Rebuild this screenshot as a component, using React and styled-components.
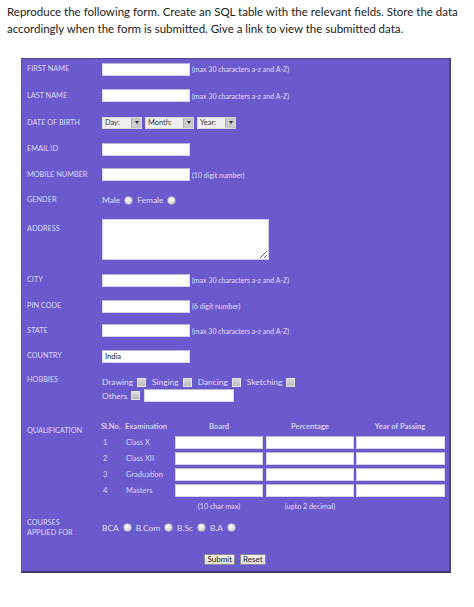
import React from "react";
import styled, { createGlobalStyle } from "styled-components";

const Global = createGlobalStyle`
  html, body { margin: 0; padding: 0; background: #fff; }
  body { font-family: Lato, "Open Sans", sans-serif; }
  * { box-sizing: border-box; }
`;

const Page = styled.div`
  width: 474px;
  height: 607px;
  background: #fff;
  padding-top: 3px;
`;

const Intro = styled.p`
  margin: 0 0 21px 0;
  padding: 0 6px 0 7px;
  font-family: Lato, sans-serif;
  font-size: 11.5px;
  line-height: 17px;
  color: #222;
`;

const Panel = styled.form`
  margin: 0 0 0 21px;
  width: 430px;
  background: #6a5acd;
  border-top: 1px solid #4b4690;
  border-left: 1px solid #5a52a8;
  border-right: 2px solid #4a4578;
  border-bottom: 2px solid #3f3a66;
  padding: 0 0 0 5px;
  color: #e2defa;
  font-family: Lato, sans-serif;
`;

const Row = styled.div`
  display: grid;
  grid-template-columns: 75px 1fr;
  align-items: ${(p) => (p.$top ? "start" : "center")};
  height: ${(p) => p.$h}px;
  padding-bottom: ${(p) => p.$pb || 0}px;
`;

const Label = styled.div`
  font-size: 7.3px;
  line-height: 10px;
  text-transform: uppercase;
  color: #ddd8f6;
  padding-top: ${(p) => p.$pt || 0}px;
`;

const Controls = styled.div`
  display: flex;
  align-items: center;
  gap: ${(p) => p.$gap || 0}px;
  padding-top: ${(p) => p.$pt || 0}px;
`;

const Stack = styled.div`
  display: flex;
  flex-direction: column;
  gap: 2px;
  padding-top: ${(p) => p.$pt || 0}px;
`;

const TextBox = styled.input.attrs({ type: "text" })`
  width: ${(p) => p.$w || 88}px;
  height: 13px;
  border: 1px solid #d6d3e6;
  border-top-color: #b9b5cf;
  background: #fff;
  padding: 0 2px;
  margin: 0;
  font-family: Lato, sans-serif;
  font-size: 7.5px;
  color: #222;
  outline: none;
`;

const Hint = styled.span`
  margin-left: 2px;
  font-size: 7px;
  color: #e2defa;
  white-space: nowrap;
`;

const FakeSelect = styled.span`
  display: inline-flex;
  align-items: center;
  justify-content: space-between;
  width: ${(p) => p.$w}px;
  height: 12px;
  background: #efefef;
  border: 1px solid #d8d8d8;
  padding-left: 2px;
  font-size: 7.4px;
  color: #333;
`;

const Arrow = styled.span`
  width: 10px;
  height: 10px;
  background: #c9c9c9;
  border-left: 1px solid #b0b0b0;
  display: inline-flex;
  align-items: center;
  justify-content: center;
  &::after {
    content: "";
    border-left: 2.5px solid transparent;
    border-right: 2.5px solid transparent;
    border-top: 3px solid #333;
  }
`;

const Opt = styled.span`
  font-size: 8.4px;
  color: #e2defa;
  margin-right: ${(p) => p.$mr ?? 4}px;
`;

const Radio = styled.span`
  display: inline-block;
  width: 9px;
  height: 9px;
  border-radius: 50%;
  border: 1px solid #a9a6bd;
  background: radial-gradient(circle at 40% 35%, #ffffff 0%, #e6e6e6 45%, #b9b9b9 100%);
  margin-right: ${(p) => p.$mr ?? 4}px;
`;

const Check = styled.span`
  display: inline-block;
  width: 9px;
  height: 9px;
  border: 1px solid #e4e4ec;
  background: linear-gradient(#d8d8d8, #bdbdbd);
  margin-right: ${(p) => p.$mr ?? 6}px;
`;

const Area = styled.textarea`
  width: 167px;
  height: 41px;
  border: 1px solid #cfcbe2;
  background: #fff;
  margin: 0;
  resize: both;
  outline: none;
`;

const QTable = styled.div`
  display: grid;
  grid-template-columns: 24px 50px 91px 90px 89px;
  grid-auto-rows: 16px;
  align-items: center;
  padding-top: 4px;
  margin-left: -1px;
`;

const QHead = styled.div`
  font-size: 7.6px;
  font-weight: 700;
  color: #d7d2f2;
  text-align: ${(p) => (p.$center ? "center" : "left")};
  width: ${(p) => (p.$center ? "88px" : "auto")};
  white-space: nowrap;
`;

const QCell = styled.div`
  font-size: 7.5px;
  color: #ddd8f6;
  padding-left: ${(p) => p.$pl || 0}px;
  white-space: nowrap;
`;

const QNote = styled.div`
  font-size: 7.2px;
  color: #e2defa;
  width: 88px;
  text-align: center;
  white-space: nowrap;
`;

const ButtonRow = styled.div`
  height: 24px;
  display: flex;
  align-items: center;
  justify-content: center;
  gap: 5px;
  padding-right: 6px;
`;

const Btn = styled.button`
  height: 11px;
  padding: 0 2px;
  border: 1px solid #8a8a8a;
  background: linear-gradient(#f4f4f4, #dcdcdc);
  font-family: Lato, sans-serif;
  font-size: 8px;
  line-height: 9px;
  color: #222;
  border-radius: 1px;
`;

const TextRow = ({ label, hint, h, pb, value }) => (
  <Row $h={h} $pb={pb}>
    <Label>{label}</Label>
    <Controls>
      <TextBox defaultValue={value} />
      {hint && <Hint>{hint}</Hint>}
    </Controls>
  </Row>
);

const quals = [
  ["1", "Class X"],
  ["2", "Class XII"],
  ["3", "Graduation"],
  ["4", "Masters"],
];

export default function App() {
  const az = "(max 30 characters a-z and A-Z)";
  return (
    <Page>
      <Global />
      <Intro>
        Reproduce the following form. Create an SQL table with the relevant fields. Store the data accordingly
        when the form is submitted. Give a link to view the submitted data.
      </Intro>
      <Panel onSubmit={(e) => e.preventDefault()}>
        <TextRow label="First Name" hint={az} h={23} pb={3} />
        <TextRow label="Last Name" hint={az} h={27} />
        <Row $h={27}>
          <Label>Date of Birth</Label>
          <Controls $gap={3}>
            <FakeSelect $w={40}>
              Day: <Arrow />
            </FakeSelect>
            <FakeSelect $w={49}>
              Month: <Arrow />
            </FakeSelect>
            <FakeSelect $w={39}>
              Year: <Arrow />
            </FakeSelect>
          </Controls>
        </Row>
        <TextRow label="Email ID" h={26} />
        <TextRow label="Mobile Number" hint="(10 digit number)" h={25} />
        <Row $h={26}>
          <Label>Gender</Label>
          <Controls>
            <Opt>Male</Opt>
            <Radio />
            <Opt>Female</Opt>
            <Radio />
          </Controls>
        </Row>
        <Row $h={53} $top>
          <Label $pt={11}>Address</Label>
          <Controls $pt={6}>
            <Area />
          </Controls>
        </Row>
        <TextRow label="City" hint={az} h={28} />
        <TextRow label="Pin Code" hint="(6 digit number)" h={24} />
        <TextRow label="State" hint={az} h={25} />
        <TextRow label="Country" h={26} value="India" />
        <Row $h={45} $top>
          <Label $pt={6}>Hobbies</Label>
          <Stack $pt={8}>
            <Controls>
              <Opt>Drawing</Opt>
              <Check />
              <Opt>Singing</Opt>
              <Check />
              <Opt>Dancing</Opt>
              <Check />
              <Opt>Sketching</Opt>
              <Check />
            </Controls>
            <Controls>
              <Opt>Others</Opt>
              <Check $mr={4} />
              <TextBox $w={90} />
            </Controls>
          </Stack>
        </Row>
        <Row $h={94} $top>
          <Label $pt={12}>Qualification</Label>
          <QTable>
            <QHead>Sl.No.</QHead>
            <QHead>Examination</QHead>
            <QHead $center>Board</QHead>
            <QHead $center>Percentage</QHead>
            <QHead $center>Year of Passing</QHead>
            {quals.map(([n, name]) => (
              <React.Fragment key={n}>
                <QCell $pl={2}>{n}</QCell>
                <QCell $pl={1}>{name}</QCell>
                <TextBox />
                <TextBox />
                <TextBox $w={89} />
              </React.Fragment>
            ))}
            <span />
            <span />
            <QNote>(10 char max)</QNote>
            <QNote>(upto 2 decimal)</QNote>
            <span />
          </QTable>
        </Row>
        <Row $h={39}>
          <Label>
            Courses
            <br />
            Applied For
          </Label>
          <Controls>
            <Opt>BCA</Opt>
            <Radio />
            <Opt>B.Com</Opt>
            <Radio />
            <Opt>B.Sc</Opt>
            <Radio />
            <Opt>B.A</Opt>
            <Radio />
          </Controls>
        </Row>
        <ButtonRow>
          <Btn type="submit">Submit</Btn>
          <Btn type="reset">Reset</Btn>
        </ButtonRow>
      </Panel>
    </Page>
  );
}
